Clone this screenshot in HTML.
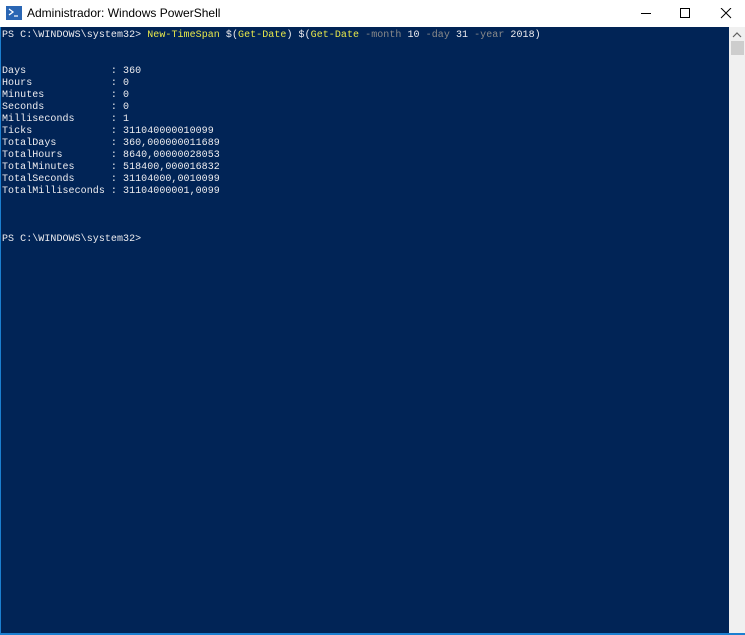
<!DOCTYPE html>
<html><head><meta charset="utf-8"><style>
body{margin:0;width:745px;height:635px;overflow:hidden;background:#fff;font-family:"Liberation Sans",sans-serif;position:relative}
.title{position:absolute;left:0;top:0;width:745px;height:27px;background:#fff}
.title span{position:absolute;left:27px;top:6px;font-size:12px;color:#000}
.con{position:absolute;left:0;top:27px;width:729px;height:606px;background:#012456;border-left:1px solid #1b7fd0;box-sizing:border-box}
pre{margin:0;padding-top:3px;font-family:"Liberation Mono",monospace;font-size:10px;line-height:12px;color:#eeedf0;letter-spacing:0.05px;padding-left:1px}
.y{color:#e8e84a}.g{color:#8a8a8a}
.sb{position:absolute;left:729px;top:27px;width:16px;height:606px;background:#f0f0f0}
.thumb{position:absolute;left:731px;top:41px;width:13px;height:14px;background:#cdcdcd}
.bot{position:absolute;left:0;top:633px;width:745px;height:2px;background:#1b7fd0}
</style></head><body>
<div class="title">
<svg style="position:absolute;left:6px;top:6px" width="16" height="14"><rect x="0" y="0" width="16" height="14" fill="#2a66b4"/><path d="M3 3 L7 6 L3 9" stroke="#fff" stroke-width="1.3" fill="none"/><path d="M8 10 H12" stroke="#fff" stroke-width="1.2"/></svg>
<span>Administrador: Windows PowerShell</span>
<svg style="position:absolute;left:640px;top:8px" width="100" height="12"><path d="M1 5.5 H11" stroke="#000" stroke-width="1"/><rect x="40.5" y="0.5" width="9" height="9" stroke="#000" fill="none"/><path d="M81 0 L91 10 M91 0 L81 10" stroke="#000" stroke-width="1"/></svg>
</div>
<div class="con"><pre>PS C:\WINDOWS\system32&gt; <span class="y">New-TimeSpan</span> $(<span class="y">Get-Date</span>) $(<span class="y">Get-Date</span> <span class="g">-month</span> 10 <span class="g">-day</span> 31 <span class="g">-year</span> 2018)


Days              : 360
Hours             : 0
Minutes           : 0
Seconds           : 0
Milliseconds      : 1
Ticks             : 311040000010099
TotalDays         : 360,000000011689
TotalHours        : 8640,00000028053
TotalMinutes      : 518400,000016832
TotalSeconds      : 31104000,0010099
TotalMilliseconds : 31104000001,0099



PS C:\WINDOWS\system32&gt;</pre></div>
<div class="sb"><svg style="position:absolute;left:3px;top:5px" width="10" height="6"><path d="M1 5 L5 1 L9 5" stroke="#606060" stroke-width="1.2" fill="none"/></svg></div>
<div class="thumb"></div>
<div class="bot"></div>
</body></html>
